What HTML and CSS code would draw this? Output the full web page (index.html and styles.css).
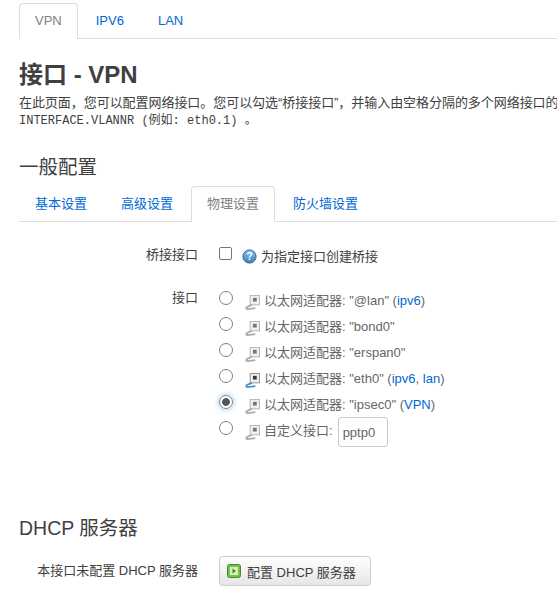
FILE: index.html
```html
<!DOCTYPE html>
<html lang="zh">
    <head>
        <meta charset="utf-8">
        <title>接口 - VPN</title>
        <link rel="stylesheet" href="styles.css">
    </head>
    <body>
        <svg class="defs" width="0" height="0">
            <symbol id="eth" viewBox="0 0 16 16">
                <rect x="5.5" y="0.5" width="10" height="10" fill="#efefef" stroke="#b5b5b5"/>
                <rect x="8.5" y="3" width="4" height="4" fill="#6f7a72"/>
                <path d="M7.5 10.5 L2.5 12.5 Q0 14.5 2.5 15 L11 14" fill="none" stroke="#a9ada4" stroke-width="2"/>
            </symbol>
            <symbol id="eth_up" viewBox="0 0 16 16">
                <rect x="5.5" y="0.5" width="10" height="10" fill="#efefef" stroke="#8f8f8f"/>
                <rect x="8.5" y="3" width="4" height="4" fill="#2f3a33"/>
                <path d="M7.5 10.5 L2.5 12.5 Q0 14.5 2.5 15 L11 14" fill="none" stroke="#4f8fcb" stroke-width="2"/>
            </symbol>
        </svg>
        <div class="tabs top_tabs">
            <a class="tab active">VPN</a>
            <a class="tab">IPV6</a>
            <a class="tab">LAN</a>
        </div>

        <h2 class="page_title">接口 - VPN</h2>
        <p class="desc">在此页面，您可以配置网络接口。您可以勾选“桥接接口”，并输入由空格分隔的多个网络接口的</p>
        <p class="desc mono">INTERFACE.VLANNR (例如: eth0.1) 。</p>

        <h3 class="section_title">一般配置</h3>
        <div class="tabs sub_tabs">
            <a class="tab">基本设置</a>
            <a class="tab">高级设置</a>
            <a class="tab active">物理设置</a>
            <a class="tab">防火墙设置</a>
        </div>

        <div class="row bridge_row">
            <div class="label">桥接接口</div>
            <div class="field">
                <input type="checkbox" class="check">
                <svg class="help" width="15" height="15" viewBox="0 0 15 15">
                    <defs>
                        <linearGradient id="help_fill" x1="0" y1="0" x2="0" y2="1">
                            <stop offset="0" stop-color="#8fc0e8"/>
                            <stop offset="1" stop-color="#3a7fbe"/>
                        </linearGradient>
                    </defs>
                    <circle cx="7.5" cy="7.5" r="6.6" fill="url(#help_fill)" stroke="#2f6ca3"/>
                    <text x="7.5" y="11" text-anchor="middle" font-size="10" font-weight="bold" font-family="Liberation Sans" fill="#fff">?</text>
                </svg>
                <span>为指定接口创建桥接</span>
            </div>
        </div>

        <div class="row iface_row">
            <div class="label">接口</div>
            <div class="iface_list">
                <div class="iface"><input type="radio" name="ifname" class="radio"><svg class="eth"><use href="#eth"/></svg><span>以太网适配器: "@lan" (<a>ipv6</a>)</span></div>
                <div class="iface"><input type="radio" name="ifname" class="radio"><svg class="eth"><use href="#eth"/></svg><span>以太网适配器: "bond0"</span></div>
                <div class="iface"><input type="radio" name="ifname" class="radio"><svg class="eth"><use href="#eth"/></svg><span>以太网适配器: "erspan0"</span></div>
                <div class="iface"><input type="radio" name="ifname" class="radio"><svg class="eth"><use href="#eth_up"/></svg><span>以太网适配器: "eth0" (<a>ipv6</a>, <a>lan</a>)</span></div>
                <div class="iface"><input type="radio" name="ifname" class="radio" checked><svg class="eth"><use href="#eth"/></svg><span>以太网适配器: "ipsec0" (<a>VPN</a>)</span></div>
                <div class="iface"><input type="radio" name="ifname" class="radio"><svg class="eth"><use href="#eth"/></svg><span>自定义接口:</span><input type="text" class="custom" value="pptp0"></div>
            </div>
        </div>

        <h3 class="section_title dhcp_title">DHCP 服务器</h3>
        <div class="row dhcp_row">
            <div class="label">本接口未配置 DHCP 服务器</div>
            <div class="field">
                <button class="btn">
                    <svg width="14" height="14" viewBox="0 0 14 14">
                        <rect x="0.5" y="0.5" width="13" height="13" rx="2" fill="#7cc04b" stroke="#3f8a2a"/>
                        <rect x="3" y="3" width="8" height="8" fill="#d8efc4"/>
                        <path d="M5.5 4.5 L9 7 L5.5 9.5 Z" fill="#3f8a2a"/>
                    </svg>
                    配置 DHCP 服务器
                </button>
            </div>
        </div>
    </body>
</html>
```
FILE: styles.css
```css
html, body {
    margin: 0;
    overflow: hidden;
    background: #fff;
}
body {
    height: 589px;
    width: 557px;
    padding-left: 19px;
    box-sizing: border-box;
    font-family: "Liberation Sans", "Noto Sans CJK SC", sans-serif;
    font-size: 13px;
    color: #404040;
}
a {
    color: #0069d6;
}
.defs {
    position: absolute;
}

.tabs {
    display: flex;
    border-bottom: 1px solid #ddd;
    width: 538px;
}
.tab {
    padding: 0 15px;
    line-height: 34px;
    border: 1px solid transparent;
    border-bottom: 0;
    border-radius: 4px 4px 0 0;
    margin-bottom: -1px;
    margin-right: 2px;
    font-size: 13px;
    color: #0069d6;
}
.tab.active {
    color: #808080;
    background: #fff;
    border-color: #ddd;
    height: 35px;
}
.top_tabs {
    margin-top: 3px;
}
.sub_tabs {
    margin-top: 4px;
}

.page_title {
    margin: 20px 0 3px;
    font-size: 24px;
    line-height: 32px;
    font-weight: bold;
}
.desc {
    margin: 0;
    white-space: nowrap;
    line-height: 18px;
    font-size: 13px;
    letter-spacing: -0.05px;
}
.mono {
    font-family: "Liberation Mono", "Noto Sans CJK SC", monospace;
    font-size: 12px;
    letter-spacing: 0;
}
.section_title {
    margin: 22px 0 0;
    font-size: 19.5px;
    line-height: 30px;
    font-weight: normal;
}

.row {
    display: flex;
}
.label {
    width: 179px;
    margin-right: 21px;
    text-align: right;
    font-size: 13px;
    line-height: 18px;
    flex: none;
}
.field {
    display: flex;
    align-items: center;
    font-size: 13px;
}
.bridge_row {
    margin-top: 24px;
    height: 18px;
}
.iface_row {
    margin-top: 25px;
}
.iface_list {
    display: flex;
    flex-direction: column;
    align-items: flex-start;
    color: #666;
    margin-top: -2px;
}
.iface {
    display: flex;
    align-items: center;
    height: 26px;
}
.iface span {
    margin-bottom: 2px;
}
.check {
    appearance: none;
    width: 13px;
    height: 13px;
    margin: -3px 10px 0 0;
    border: 1px solid #767676;
    border-radius: 2px;
    background: #fff;
}
.help {
    margin: 3px 4px 0 0;
}
.radio {
    appearance: none;
    width: 14px;
    height: 14px;
    margin: 0 12px 4px 0;
    border: 1px solid #808080;
    border-radius: 50%;
    background: #fff;
}
.radio:checked {
    background: radial-gradient(circle, #555 0, #555 3.5px, #fff 4.2px);
    box-shadow: 0 0 4px 2px rgba(82, 168, 236, .35);
}
.eth {
    width: 15px;
    height: 15px;
    margin: 4px 4px 0 0;
}
.custom {
    width: 50px;
    height: 30px;
    box-sizing: border-box;
    margin: 4px 0 0 5px;
    padding: 0 4px;
    border: 1px solid #ccc;
    border-radius: 3px;
    font: 13px "Liberation Sans", sans-serif;
    color: #666;
}
.dhcp_title {
    margin-top: 70px;
}
.dhcp_row {
    margin-top: 13px;
    align-items: center;
}
.btn {
    display: flex;
    align-items: center;
    gap: 6px;
    width: 152px;
    height: 30px;
    padding: 0 7px;
    border: 1px solid #ccc;
    border-radius: 4px;
    background: linear-gradient(#fff, #e6e6e6);
    font: 13px "Liberation Sans", "Noto Sans CJK SC", sans-serif;
    color: #404040;
    white-space: nowrap;
}
```
